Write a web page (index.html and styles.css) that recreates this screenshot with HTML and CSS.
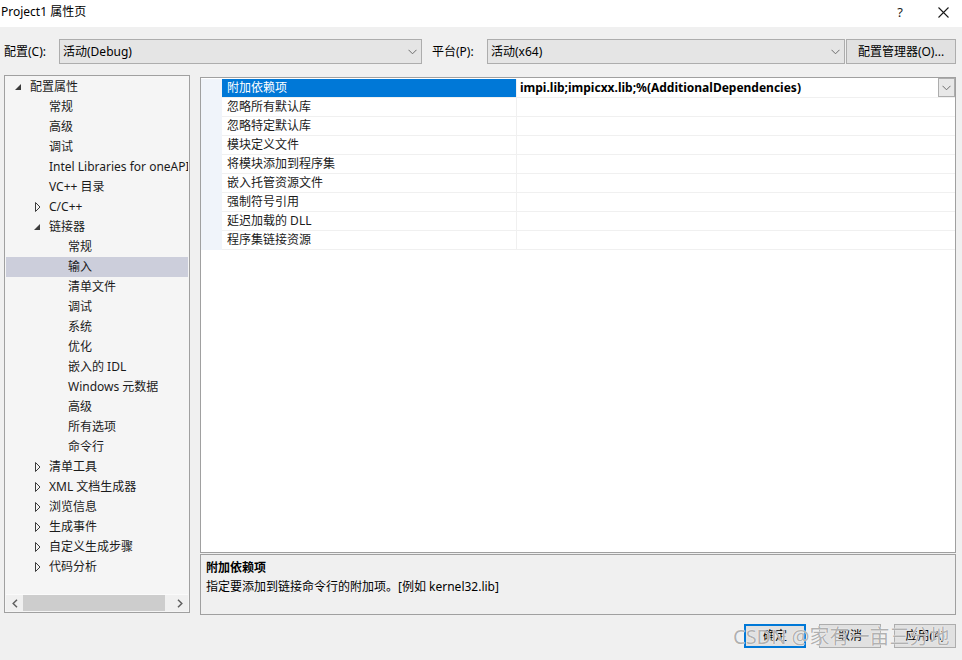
FILE: index.html
```html
<!DOCTYPE html>
<html lang="zh-CN">
<head>
<meta charset="utf-8">
<title>Project1 属性页</title>
<link rel="stylesheet" href="styles.css">
</head>
<body>
<div class="dialog">
  <div class="titlebar">
    <span class="title">Project1 属性页</span>
    <span class="help">?</span>
    <svg class="close" width="11" height="11" viewBox="0 0 11 11"><path d="M0.5 0.5 L10.5 10.5 M10.5 0.5 L0.5 10.5" stroke="#1a1a1a" stroke-width="1.1" fill="none"/></svg>
  </div>

  <div class="toolbar">
    <span class="lbl">配置(C):</span>
    <div class="combo combo-config">
      <span class="combo-text">活动(Debug)</span>
      <svg class="chev" width="9" height="6" viewBox="0 0 9 6"><path d="M0.5 0.8 L4.5 4.8 L8.5 0.8" stroke="#6d6d6d" stroke-width="1" fill="none"/></svg>
    </div>
    <span class="lbl lbl-platform">平台(P):</span>
    <div class="combo combo-platform">
      <span class="combo-text">活动(x64)</span>
      <svg class="chev" width="9" height="6" viewBox="0 0 9 6"><path d="M0.5 0.8 L4.5 4.8 L8.5 0.8" stroke="#6d6d6d" stroke-width="1" fill="none"/></svg>
    </div>
    <div class="btn btn-mgr">配置管理器(O)...</div>
  </div>

  <div class="main">
    <div class="tree">
      <ul class="tree-list">
        <li class="node l1"><span class="tw"><svg width="6" height="6" viewBox="0 0 6 6"><polygon points="6,0 6,6 0,6" fill="#3c3c3c"/></svg></span>配置属性</li>
        <li class="node l2"><span class="tw"></span>常规</li>
        <li class="node l2"><span class="tw"></span>高级</li>
        <li class="node l2"><span class="tw"></span>调试</li>
        <li class="node l2"><span class="tw"></span>Intel Libraries for oneAPI</li>
        <li class="node l2"><span class="tw"></span>VC++ 目录</li>
        <li class="node l2"><span class="tw col"><svg width="6" height="10" viewBox="0 0 6 10"><polygon points="0.5,0.5 5,5 0.5,9.5" fill="none" stroke="#3c3c3c" stroke-width="1"/></svg></span>C/C++</li>
        <li class="node l2"><span class="tw"><svg width="6" height="6" viewBox="0 0 6 6"><polygon points="6,0 6,6 0,6" fill="#3c3c3c"/></svg></span>链接器</li>
        <li class="node l3"><span class="tw"></span>常规</li>
        <li class="node l3 selected"><span class="tw"></span>输入</li>
        <li class="node l3"><span class="tw"></span>清单文件</li>
        <li class="node l3"><span class="tw"></span>调试</li>
        <li class="node l3"><span class="tw"></span>系统</li>
        <li class="node l3"><span class="tw"></span>优化</li>
        <li class="node l3"><span class="tw"></span>嵌入的 IDL</li>
        <li class="node l3"><span class="tw"></span>Windows 元数据</li>
        <li class="node l3"><span class="tw"></span>高级</li>
        <li class="node l3"><span class="tw"></span>所有选项</li>
        <li class="node l3"><span class="tw"></span>命令行</li>
        <li class="node l2"><span class="tw col"><svg width="6" height="10" viewBox="0 0 6 10"><polygon points="0.5,0.5 5,5 0.5,9.5" fill="none" stroke="#3c3c3c" stroke-width="1"/></svg></span>清单工具</li>
        <li class="node l2"><span class="tw col"><svg width="6" height="10" viewBox="0 0 6 10"><polygon points="0.5,0.5 5,5 0.5,9.5" fill="none" stroke="#3c3c3c" stroke-width="1"/></svg></span>XML 文档生成器</li>
        <li class="node l2"><span class="tw col"><svg width="6" height="10" viewBox="0 0 6 10"><polygon points="0.5,0.5 5,5 0.5,9.5" fill="none" stroke="#3c3c3c" stroke-width="1"/></svg></span>浏览信息</li>
        <li class="node l2"><span class="tw col"><svg width="6" height="10" viewBox="0 0 6 10"><polygon points="0.5,0.5 5,5 0.5,9.5" fill="none" stroke="#3c3c3c" stroke-width="1"/></svg></span>生成事件</li>
        <li class="node l2"><span class="tw col"><svg width="6" height="10" viewBox="0 0 6 10"><polygon points="0.5,0.5 5,5 0.5,9.5" fill="none" stroke="#3c3c3c" stroke-width="1"/></svg></span>自定义生成步骤</li>
        <li class="node l2"><span class="tw col"><svg width="6" height="10" viewBox="0 0 6 10"><polygon points="0.5,0.5 5,5 0.5,9.5" fill="none" stroke="#3c3c3c" stroke-width="1"/></svg></span>代码分析</li>
      </ul>
      <div class="hscroll">
        <span class="sb-arrow"><svg width="6" height="9" viewBox="0 0 6 9"><path d="M5 0.8 L1.2 4.5 L5 8.2" stroke="#606060" stroke-width="1.5" fill="none"/></svg></span>
        <div class="sb-track"><div class="sb-thumb"></div></div>
        <span class="sb-arrow"><svg width="6" height="9" viewBox="0 0 6 9"><path d="M1 0.8 L4.8 4.5 L1 8.2" stroke="#606060" stroke-width="1.5" fill="none"/></svg></span>
      </div>
    </div>

    <div class="right">
      <div class="grid">
        <div class="rows">
          <div class="row selected">
            <div class="gutter"></div>
            <div class="cell name">附加依赖项</div>
            <div class="cell value"><span class="val-text">impi.lib;impicxx.lib;%(AdditionalDependencies)</span>
              <span class="dd"><svg width="9" height="6" viewBox="0 0 9 6"><path d="M0.5 0.8 L4.5 4.8 L8.5 0.8" stroke="#6d6d6d" stroke-width="1" fill="none"/></svg></span>
            </div>
          </div>
          <div class="row"><div class="gutter"></div><div class="cell name">忽略所有默认库</div><div class="cell value"></div></div>
          <div class="row"><div class="gutter"></div><div class="cell name">忽略特定默认库</div><div class="cell value"></div></div>
          <div class="row"><div class="gutter"></div><div class="cell name">模块定义文件</div><div class="cell value"></div></div>
          <div class="row"><div class="gutter"></div><div class="cell name">将模块添加到程序集</div><div class="cell value"></div></div>
          <div class="row"><div class="gutter"></div><div class="cell name">嵌入托管资源文件</div><div class="cell value"></div></div>
          <div class="row"><div class="gutter"></div><div class="cell name">强制符号引用</div><div class="cell value"></div></div>
          <div class="row"><div class="gutter"></div><div class="cell name">延迟加载的 DLL</div><div class="cell value"></div></div>
          <div class="row"><div class="gutter"></div><div class="cell name">程序集链接资源</div><div class="cell value"></div></div>
        </div>
      </div>
      <div class="desc">
        <div class="desc-title">附加依赖项</div>
        <div class="desc-text">指定要添加到链接命令行的附加项。[例如 kernel32.lib]</div>
      </div>
    </div>
  </div>

  <div class="footer">
    <div class="btn btn-foot btn-default">确定</div>
    <div class="btn btn-foot">取消</div>
    <div class="btn btn-foot">应用(A)</div>
  </div>

  <div class="watermark">CSDN @家有一亩三分地</div>
</div>
</body>
</html>
```

FILE: styles.css
```css
* { box-sizing: border-box; }

html, body {
  margin: 0;
  padding: 0;
}

body {
  width: 962px;
  height: 660px;
  overflow: hidden;
  background: #f0f0f0;
  font-family: "Noto Sans", "Noto Sans CJK SC", sans-serif;
  font-size: 12px;
  color: #000;
}

.dialog {
  position: relative;
  width: 962px;
  height: 660px;
  display: flex;
  flex-direction: column;
}
.dialog > * { flex: none; }

/* title bar */
.titlebar {
  height: 27px;
  background: #fff;
  display: flex;
  align-items: center;
  padding: 0 0 3px 1px;
}
.title {
  flex: 1;
  font-size: 12px;
  line-height: 16px;
}
.help {
  font-size: 13px;
  line-height: 16px;
  margin-right: 35px;
  color: #1a1a1a;
}
.close {
  margin-right: 13px;
  margin-top: 1px;
}

/* toolbar */
.toolbar {
  display: flex;
  align-items: flex-start;
  padding: 12px 0 0 4px;
  height: 37px;
}
.lbl {
  width: 55px;
  line-height: 25px;
}
.lbl-platform {
  margin-left: 10px;
}
.combo {
  height: 25px;
  background: #e5e5e5;
  border: 1px solid #adadad;
  display: flex;
  align-items: center;
  padding: 0 4px 0 3px;
}
.combo-config { width: 363px; }
.combo-platform { width: 358px; }
.combo-text {
  flex: 1;
  line-height: 20px;
}
.chev { display: block; }
.btn {
  background: #e1e1e1;
  border: 1px solid #adadad;
  display: flex;
  align-items: center;
  justify-content: center;
  line-height: 20px;
}
.btn-mgr {
  width: 110px;
  height: 25px;
  margin-left: 1px;
}

/* main area */
.main {
  display: flex;
  padding-left: 4px;
  margin-top: 11px;
  height: 540px;
}

.tree {
  width: 186px;
  height: 538px;
  border: 1px solid #a0a0a0;
  background: #f5f5f5;
  padding: 1px 1px 1px 0;
  display: flex;
  flex-direction: column;
}
.tree-list {
  list-style: none;
  margin: 0;
  padding: 0;
  flex: 1;
  overflow: hidden;
}
.node {
  height: 20px;
  line-height: 20px;
  display: flex;
  align-items: center;
  white-space: nowrap;
  overflow: hidden;
  color: #1b1b1b;
}
.node.selected {
  background: #cccedb;
  margin-left: 1px;
}
.node.selected .tw { margin-left: -1px; }
.tw {
  width: 19px;
  flex: none;
  height: 20px;
  display: flex;
  align-items: center;
  padding-left: 4px;
}
.tw.col { padding-left: 5px; }
.tw svg { display: block; }
.l1 { padding-left: 6px; }
.l2 { padding-left: 25px; }
.l3 { padding-left: 44px; }

.hscroll {
  height: 17px;
  flex: none;
  display: flex;
  align-items: stretch;
  background: #f0f0f0;
  margin-left: 1px;
  border-top: 1px solid #fafafa;
}
.sb-arrow {
  width: 17px;
  display: flex;
  align-items: center;
  justify-content: center;
}
.sb-track {
  flex: 1;
  display: flex;
  align-items: stretch;
}
.sb-thumb {
  width: 142px;
  background: #cdcdcd;
}

.right {
  margin-left: 10px;
  margin-top: 2px;
  width: 756px;
  display: flex;
  flex-direction: column;
}

.grid {
  height: 476px;
  flex: none;
  background: #fff;
  border: 1px solid #a0a0a0;
  padding-top: 1px;
}
.row {
  display: flex;
  height: 19px;
}
.gutter {
  width: 21px;
  background: #f0f4fa;
  flex: none;
}
.cell {
  height: 19px;
  border-bottom: 1px solid #f0f0f0;
  line-height: 18px;
  white-space: nowrap;
}
.name {
  width: 294px;
  flex: none;
  padding-left: 5px;
  color: #1b1b1b;
}
.value {
  flex: 1;
  border-left: 1px solid #f0f0f0;
  padding-left: 3px;
  display: flex;
  align-items: flex-start;
}
.row.selected .name {
  background: #0078d7;
  color: #fff;
}
.val-text {
  flex: 1;
  font-weight: bold;
}
.dd {
  width: 17px;
  height: 19px;
  margin-top: -1px;
  background: #e8e8e8;
  border: 1px solid #adadad;
  display: flex;
  align-items: center;
  justify-content: center;
}

.desc {
  margin-top: 1px;
  height: 61px;
  flex: none;
  border: 1px solid #a0a0a0;
  background: #f0f0f0;
  padding: 3px 5px 0;
  line-height: 19px;
}
.desc-title { font-weight: bold; }

/* footer */
.footer {
  display: flex;
  justify-content: flex-end;
  gap: 13px;
  padding-right: 6px;
  margin-top: 9px;
}
.btn-foot {
  width: 62px;
  height: 24px;
}
.btn-default {
  border: 2px solid #0078d7;
}

.watermark {
  position: absolute;
  left: 733px;
  top: 624px;
  font-size: 20px;
  line-height: 26px;
  color: rgba(110, 110, 110, 0.55);
  text-shadow: 0 0 1px #fff, 0 0 1px #fff;
  white-space: nowrap;
  pointer-events: none;
}
```
